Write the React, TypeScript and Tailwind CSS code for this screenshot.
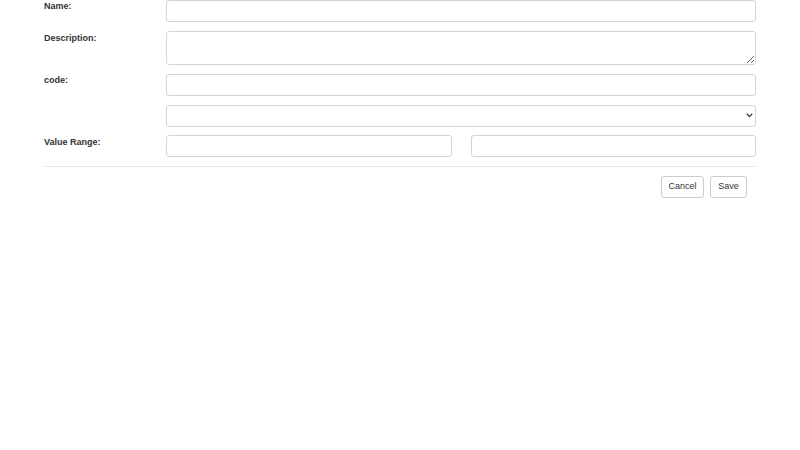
import React from "react";

const inputCls =
  "block w-full h-[22px] border border-[#d4d4d4] rounded-[3px] bg-white outline-none";
const labelCls = "w-[122px] shrink-0 text-[9px] font-bold leading-[12px]";

export default function App() {
  return (
    <div
      className="w-[800px] h-[450px] bg-white text-[#333]"
      style={{ fontFamily: '"Liberation Sans", Arial, sans-serif' }}
    >
      <div className="pl-[44px] w-[756px]">
        <div className="flex h-[22px] mb-[9px]">
          <label className={labelCls}>Name:</label>
          <input className={inputCls} />
        </div>
        <div className="flex h-[34px] mb-[9px]">
          <label className={labelCls + " pt-[1px]"}>Description:</label>
          <textarea className="block w-full h-[34px] border border-[#d4d4d4] rounded-[3px] bg-white outline-none" />
        </div>
        <div className="flex h-[22px] mb-[9px]">
          <label className={labelCls}>code:</label>
          <input className={inputCls} />
        </div>
        <div className="flex h-[22px] mb-[8px]">
          <div className="w-[122px] shrink-0" />
          <div className="relative w-full h-[22px]">
            <select className="block w-full h-[22px] border border-[#d4d4d4] rounded-[3px] bg-white outline-none appearance-none" />
            <svg
              className="absolute right-[3px] top-[8px]"
              width="7"
              height="5"
              viewBox="0 0 7 5"
              fill="none"
            >
              <path d="M0.8 0.8 L3.5 3.6 L6.2 0.8" stroke="#333" strokeWidth="1.3" />
            </svg>
          </div>
        </div>
        <div className="flex h-[22px]">
          <label className={labelCls + " pt-[1px]"}>Value Range:</label>
          <div className="flex w-full gap-[19px]">
            <input className={inputCls} />
            <input className={inputCls} />
          </div>
        </div>
        <div className="border-t border-[#e8e8e8] mt-[9px] pt-[9px] flex justify-end gap-[6px] pr-[9px]">
          <button className="h-[22px] w-[43px] border border-[#ccc] rounded-[3px] bg-white text-[9px] text-[#333]">Cancel</button>
          <button className="h-[22px] w-[37px] border border-[#ccc] rounded-[3px] bg-white text-[9px] text-[#333]">Save</button>
        </div>
      </div>
    </div>
  );
}
